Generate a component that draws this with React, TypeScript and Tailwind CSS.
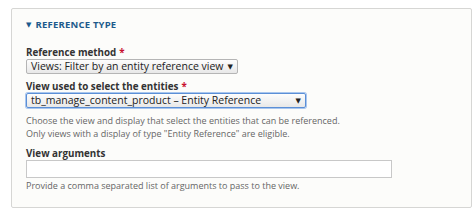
import React from "react";

const font = { fontFamily: '"Open Sans", "DejaVu Sans", sans-serif' };

const Required = () => <span className="ml-[3px] text-[#c8102e]">*</span>;

const FakeSelect: React.FC<{ text: string; width: string; focused?: boolean }> = ({
  text,
  width,
  focused,
}) => (
  <div
    className={`flex h-[15px] items-center justify-between rounded-[2px] border bg-gradient-to-b from-[#fdfdfd] to-[#e8e8e8] pl-[4px] pr-[4px] text-[10.5px] leading-none text-[#222] ${width} ${
      focused
        ? "border-[#5b8fd6] shadow-[0_0_0_1px_#a9c6ee]"
        : "border-[#b5b5b5]"
    }`}
  >
    <span>{text}</span>
    <span className="text-[7px]">▼</span>
  </div>
);

export default function App() {
  return (
    <div className="bg-white pl-[11px] pr-[2px] pt-[8px]" style={font}>
      <div className="h-[200px] rounded-[2px] border border-[#d6d6d4] bg-[#fcfcfa] pl-[14px]">
        <div className="mt-[10px] flex h-[12px] items-center gap-[4px] text-[9.5px] font-bold uppercase tracking-[0.2px] text-[#1d5a8c]">
          <span className="text-[7px]">▼</span>
          <span>Reference type</span>
        </div>

        <div className="mt-[16px] text-[9.8px] font-bold leading-[12px] text-[#333]">
          Reference method
          <Required />
        </div>
        <div>
          <FakeSelect text="Views: Filter by an entity reference view" width="w-[212px]" />
        </div>

        <div className="mt-[7px] text-[9.8px] font-bold leading-[12px] text-[#333]">
          View used to select the entities
          <Required />
        </div>
        <div>
          <FakeSelect
            text="tb_manage_content_product – Entity Reference"
            width="w-[280px]"
            focused
          />
        </div>

        <div className="mt-[7px] text-[9px] leading-[12.5px] text-[#666]">
          <p>Choose the view and display that select the entities that can be referenced.</p>
          <p>Only views with a display of type "Entity Reference" are eligible.</p>
        </div>

        <div className="mt-[8px] text-[9.8px] font-bold leading-[12px] text-[#333]">
          View arguments
        </div>
        <div className="h-[18px] w-[366px] border border-[#c8c8c8] bg-white" />
        <p className="mt-[2px] text-[9px] leading-[12.5px] text-[#666]">
          Provide a comma separated list of arguments to pass to the view.
        </p>
      </div>
    </div>
  );
}
